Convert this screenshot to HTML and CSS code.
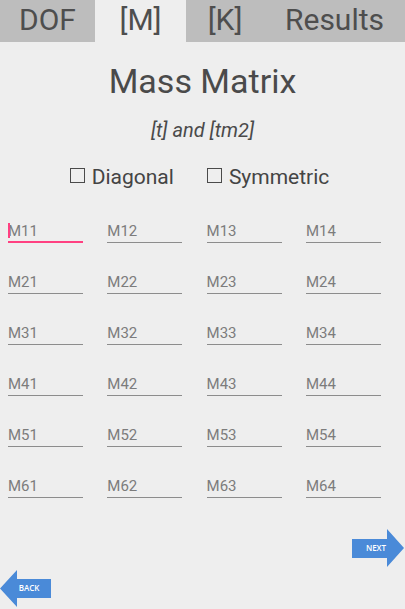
FILE: index.html
```html
<!DOCTYPE html>
<html>
<head>
<meta charset="utf-8">
<link rel="stylesheet" href="styles.css">
</head>
<body>
<div class="app">
  <nav class="tabs">
    <div class="tab tab-dof">DOF</div>
    <div class="tab tab-m active">[M]</div>
    <div class="tab tab-k">[K]</div>
    <div class="tab tab-res">Results</div>
  </nav>
  <h1 class="title">Mass Matrix</h1>
  <p class="subtitle">[t] and [tm2]</p>
  <div class="checks">
    <label class="check"><span class="box"></span><span class="check-label">Diagonal</span></label>
    <label class="check"><span class="box"></span><span class="check-label">Symmetric</span></label>
  </div>
  <div class="grid">
    <div class="field focused">M11</div><div class="field">M12</div><div class="field">M13</div><div class="field">M14</div>
    <div class="field">M21</div><div class="field">M22</div><div class="field">M23</div><div class="field">M24</div>
    <div class="field">M31</div><div class="field">M32</div><div class="field">M33</div><div class="field">M34</div>
    <div class="field">M41</div><div class="field">M42</div><div class="field">M43</div><div class="field">M44</div>
    <div class="field">M51</div><div class="field">M52</div><div class="field">M53</div><div class="field">M54</div>
    <div class="field">M61</div><div class="field">M62</div><div class="field">M63</div><div class="field">M64</div>
  </div>
  <div class="nav">
    <svg class="btn-next" width="53" height="38" viewBox="0 0 53 38">
      <polygon points="0,10 35,10 35,0 52,19 35,38 35,29 0,29" fill="#4a8ad8"/>
      <text x="24" y="22" text-anchor="middle" class="btn-text">NEXT</text>
    </svg>
    <svg class="btn-back" width="52" height="37" viewBox="0 0 52 37">
      <polygon points="0,18.5 17,0 17,9 51,9 51,28 17,28 17,37" fill="#4a8ad8"/>
      <text x="29" y="21" text-anchor="middle" class="btn-text">BACK</text>
    </svg>
  </div>
</div>
</body>
</html>
```
FILE: styles.css
```css
html, body {
  margin: 0;
  padding: 0;
  background: #eeeeee;
}
body {
  font-family: Roboto, "Noto Sans", sans-serif;
  width: 405px;
  height: 609px;
  overflow: hidden;
}
.app {
  display: flex;
  flex-direction: column;
}
.tabs {
  display: flex;
  height: 42px;
  background: #bdbdbd;
}
.tab {
  font-size: 30px;
  line-height: 40px;
  padding-bottom: 2px;
  text-align: center;
  color: #4e4e4e;
}
.tab-dof { width: 95px; }
.tab-m { width: 91px; }
.tab-k { width: 78px; }
.tab-res { flex: 1; }
.tab.active { background: #eeeeee; }

.title {
  margin: 19px 0 0;
  font-size: 34px;
  line-height: 40px;
  font-weight: 400;
  text-align: center;
  color: #4a4a4a;
}
.subtitle {
  margin: 17px 0 0;
  font-size: 20px;
  line-height: 24px;
  font-style: italic;
  text-align: center;
  color: #4a4a4a;
}
.checks {
  margin-top: 22px;
  padding-right: 6px;
  display: flex;
  justify-content: center;
  gap: 33px;
  height: 26px;
}
.check {
  display: flex;
  align-items: center;
  gap: 7px;
}
.box {
  width: 13px;
  height: 13px;
  border: 1px solid #4a4a4a;
  margin-bottom: 3px;
}
.check-label {
  font-size: 21px;
  line-height: 26px;
  color: #444444;
}
.grid {
  margin-top: 32px;
  padding-left: 8px;
  display: grid;
  grid-template-columns: repeat(4, 99.3px);
  row-gap: 30px;
}
.field {
  position: relative;
  width: 75px;
  font-size: 15px;
  line-height: 18px;
  padding-bottom: 2px;
  border-bottom: 1px solid #8c8c8c;
  color: #7c7c7c;
}
.field.focused {
  border-bottom: 2px solid #ff4081;
  padding-bottom: 1px;
}
.field.focused::before {
  content: "";
  position: absolute;
  left: 0;
  top: 1px;
  width: 2px;
  height: 15px;
  background: #ff4081;
}
.nav {
  margin-top: 31px;
  display: flex;
  flex-direction: column;
}
.btn-next {
  align-self: flex-end;
  display: block;
}
.btn-back {
  align-self: flex-start;
  margin-top: 3px;
  display: block;
}
.btn-text {
  font-family: "Open Sans", "Liberation Sans", sans-serif;
  font-size: 8px;
  font-weight: 600;
  fill: #ffffff;
}
```
